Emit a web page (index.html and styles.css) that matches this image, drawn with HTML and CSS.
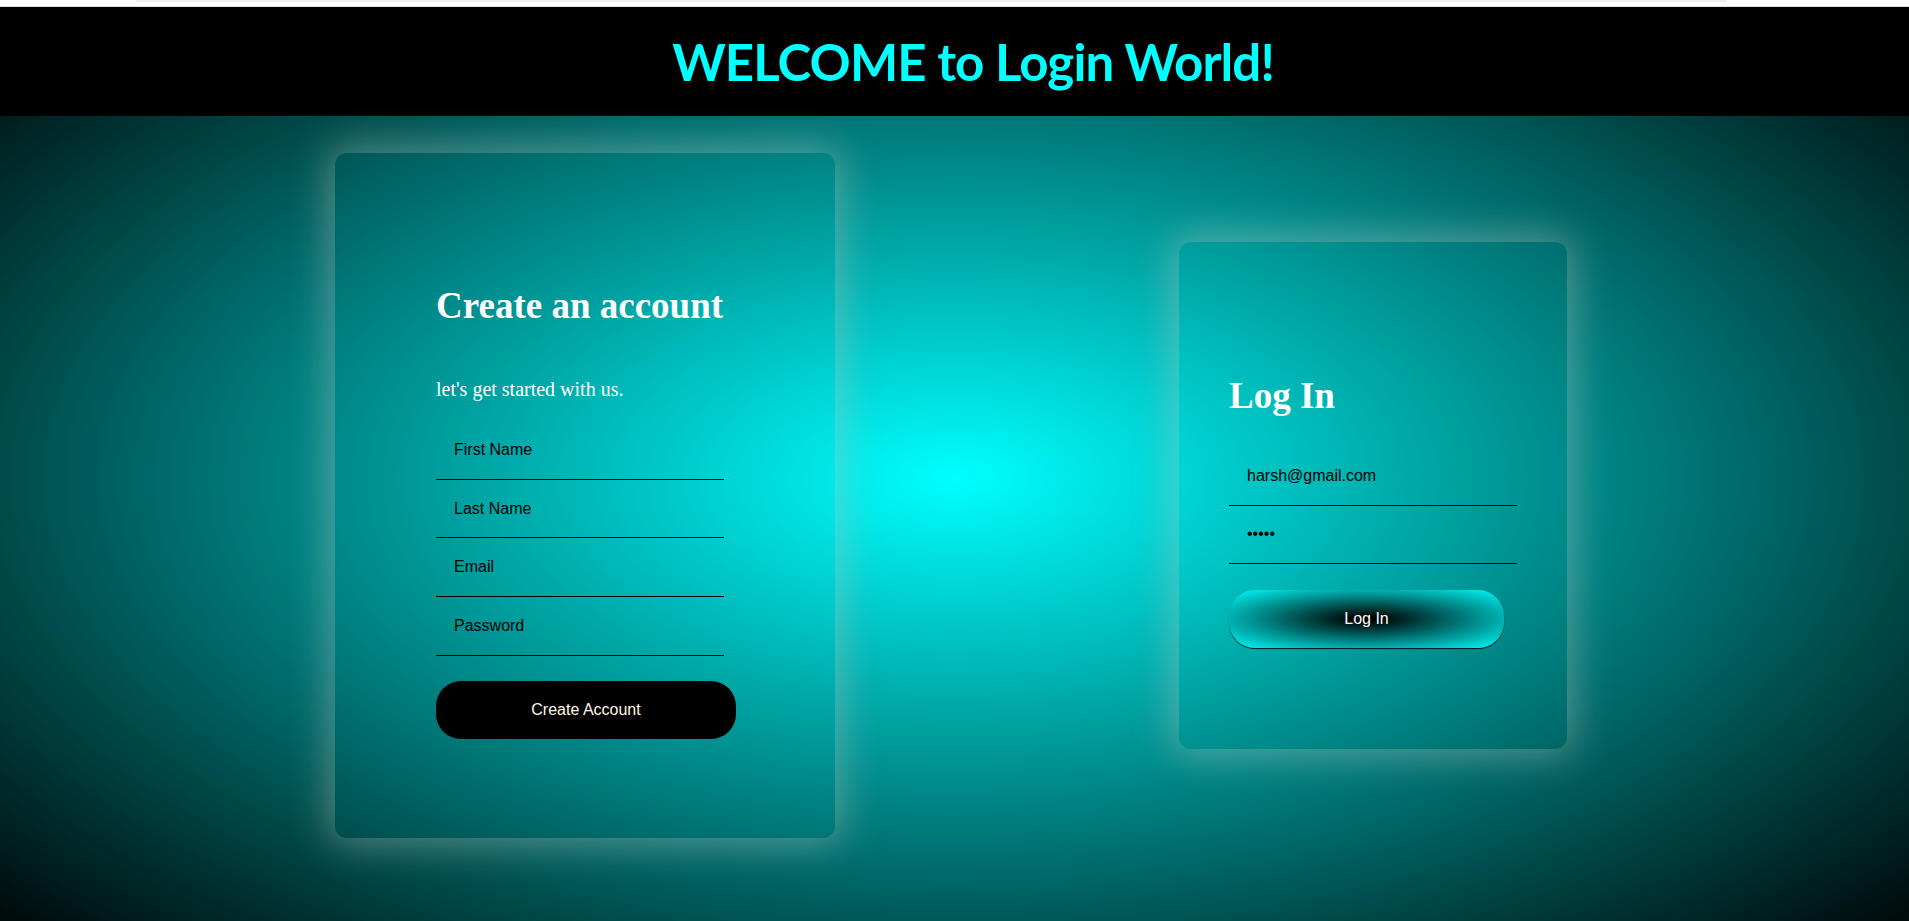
FILE: index.html
```html
<!DOCTYPE html>
<html lang="en">
<head>
    <meta charset="UTF-8">
    <meta name="viewport" content="width=device-width, initial-scale=1.0">
    <title>Login World</title>
    <link rel="stylesheet" href="styles.css">
</head>
<body>
    <div class="topbar"><div class="topbar-track"></div></div>
    <header class="banner">
        <h1>WELCOME to Login World!</h1>
    </header>

    <main class="forms">
        <form class="card card-signup">
            <h2>Create an account</h2>
            <p>let's get started with us.</p>
            <input type="text" placeholder="First Name">
            <input type="text" placeholder="Last Name">
            <input type="email" placeholder="Email">
            <input type="password" placeholder="Password">
            <button type="button" class="btn btn-create">Create Account</button>
        </form>

        <form class="card card-login">
            <h2>Log In</h2>
            <input type="email" value="harsh@gmail.com">
            <input type="password" value="12345">
            <button type="button" class="btn btn-login">Log In</button>
        </form>
    </main>
</body>
</html>
```

FILE: styles.css
```css
html, body{
    margin: 0;
    padding: 0;
}
body{
    min-height: 100vh;
    background: radial-gradient(ellipse 1350px 676px at 50% 478px, #00ffff, #000000);
    background-color: #000;
    font-family: "Liberation Serif", serif;
}

/* thin white strip above the banner */
.topbar{
    height: 6px;
    background-color: #fff;
    border-bottom: 1px solid #e2e2e2;
}
.topbar-track{
    height: 2px;
    margin: 0 182px 0 136px;
    background-color: #efefef;
    border-radius: 0 0 3px 3px;
}

.banner{
    height: 109px;
    background-color: #000;
    display: flex;
    align-items: center;
    justify-content: center;
    padding-left: 37px;
}
.banner h1{
    margin: 0;
    color: #00ffff;
    font-family: Lato, "Open Sans", sans-serif;
    font-weight: 700;
    font-size: 51px;
    letter-spacing: -0.9px;
}

.forms{
    display: flex;
    align-items: center;
    gap: 344px;
    padding: 37px 0 37px 335px;
}

.card{
    display: flex;
    flex-direction: column;
    align-items: flex-start;
    border-radius: 12px;
    background: transparent;
    box-shadow: 0 0 38px 6px rgba(200, 200, 190, 0.42);
    color: #fff;
}
.card h2{
    margin: 0;
    font-size: 37px;
    font-weight: 700;
}
.card p{
    margin: 51px 0 20px;
    font-size: 20px;
}
.card-signup{
    padding: 131px 99px 99px 101px;
}
.card-login{
    padding: 132px 50px 101px 50px;
}
.card-login h2{
    margin-bottom: 30px;
}

.card input{
    box-sizing: border-box;
    width: 288px;
    height: 58.7px;
    padding: 0 18px;
    border: none;
    border-bottom: 1px solid #000;
    background: transparent;
    outline: none;
    color: #000;
    font-family: "Liberation Sans", Arial, sans-serif;
    font-size: 16px;
}
.card input::placeholder{
    color: #000;
}

.btn{
    margin-top: 25px;
    border: none;
    color: #fff;
    font-family: "Liberation Sans", Arial, sans-serif;
    font-size: 16px;
    cursor: pointer;
}
.btn-create{
    width: 300px;
    height: 58.5px;
    border-radius: 25px;
    background-color: #000;
    color: #fff8e6;
}
.btn-login{
    width: 275px;
    height: 58px;
    margin-top: 26px;
    border-radius: 26px;
    background: radial-gradient(#000 4%, #00ffff);
    box-shadow: 0 1px 1px rgba(0, 0, 0, 0.9);
}
```
